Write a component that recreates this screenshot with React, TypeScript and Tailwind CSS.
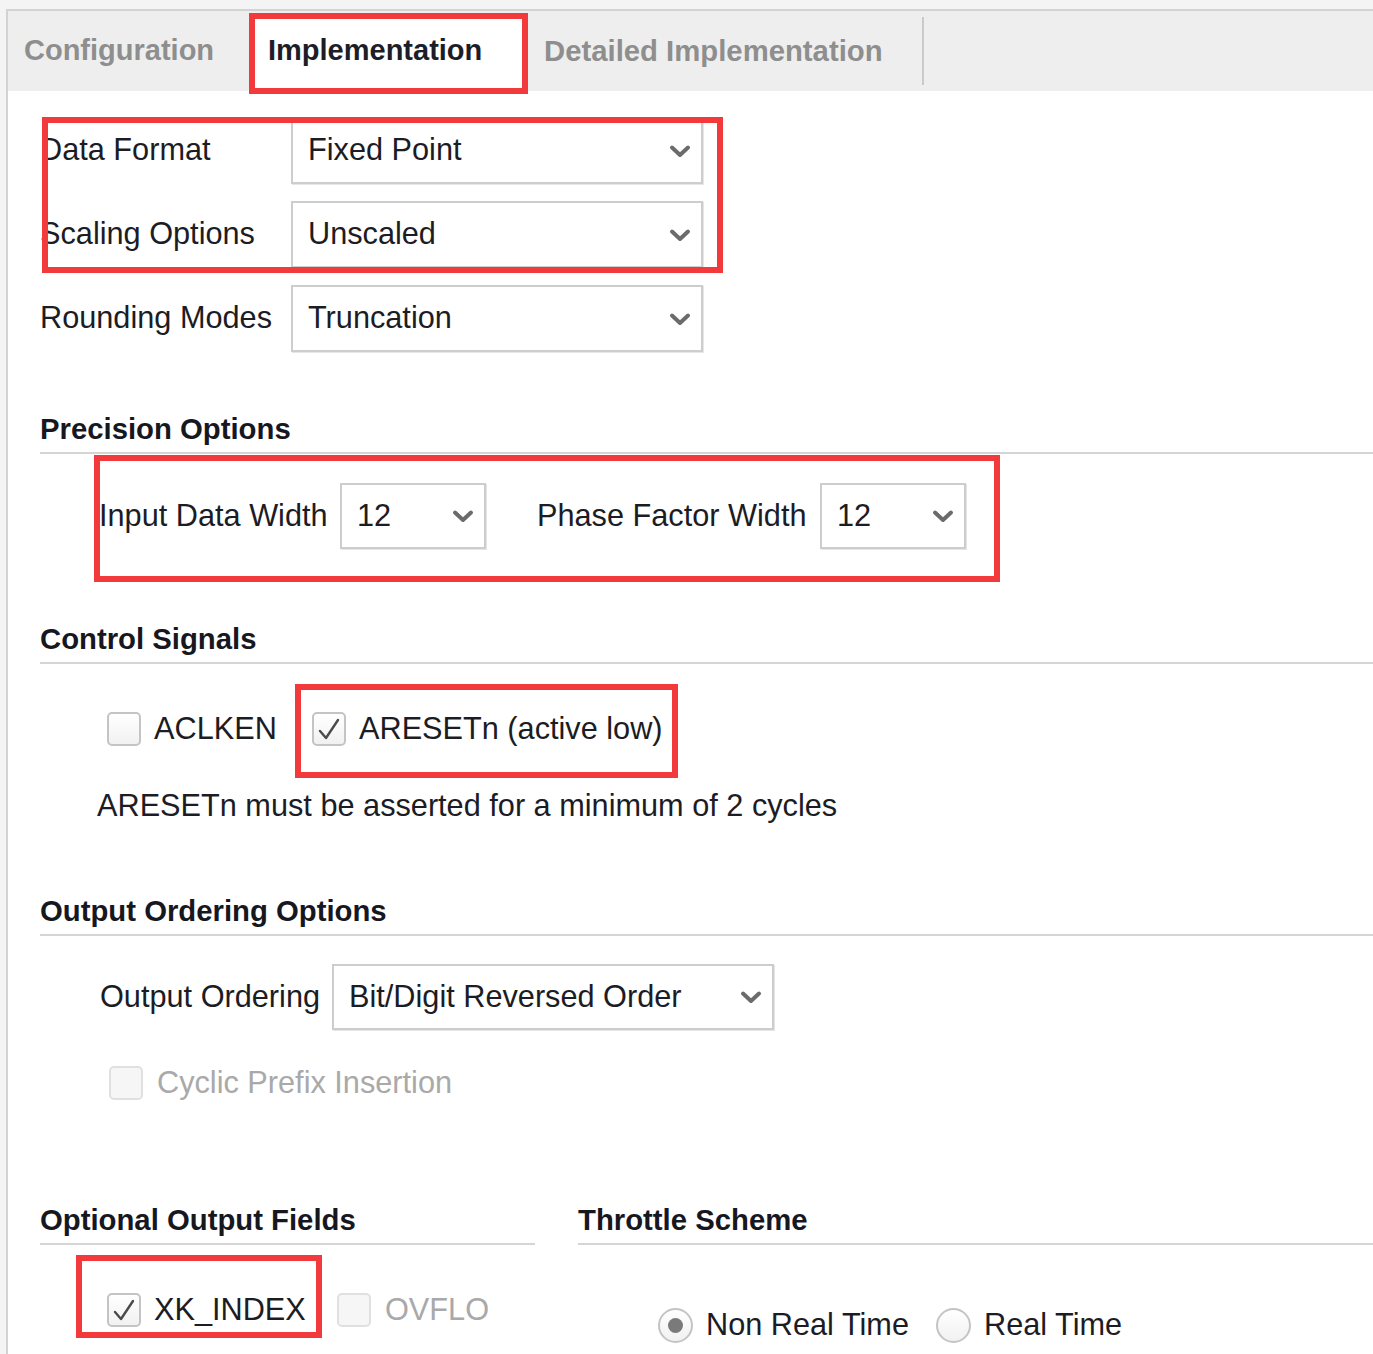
import React from "react";

const FONT = { fontFamily: '"Liberation Sans", Arial, sans-serif' };

function Chevron() {
  return (
    <svg width="22" height="14" viewBox="0 0 22 14" className="shrink-0">
      <path d="M3 3.5 L11 11 L19 3.5" fill="none" stroke="#6b6b6b" strokeWidth="4" strokeLinecap="round" strokeLinejoin="round" />
    </svg>
  );
}

function Select({ value, w, h = "h-[66px]" }: { value: string; w: string; h?: string }) {
  return (
    <div className={`${w} ${h} shrink-0 flex items-center justify-between border-2 border-[#cdcdcd] bg-white pl-[15px] pr-[10px] shadow-[1px_1px_0_#e6e6e6]`}>
      <span className="text-[30.7px] text-[#1c1c24] leading-none">{value}</span>
      <Chevron />
    </div>
  );
}

function Checkbox({ checked = false, disabled = false }: { checked?: boolean; disabled?: boolean }) {
  return (
    <div
      className={`w-[34px] h-[34px] shrink-0 rounded-[5px] border-2 flex items-center justify-center ${
        disabled ? "border-[#e0e0e0] bg-[#f6f6f6]" : "border-[#c4c4c4] bg-gradient-to-b from-white to-[#f1f1f1]"
      }`}
    >
      {checked && (
        <svg width="26" height="26" viewBox="0 0 26 26">
          <path d="M4 15 L10 22 L22 4" fill="none" stroke="#4a4a4a" strokeWidth="2.4" strokeLinecap="round" strokeLinejoin="round" />
        </svg>
      )}
    </div>
  );
}

function Radio({ selected = false }: { selected?: boolean }) {
  return (
    <div className="w-[35px] h-[35px] shrink-0 rounded-full border-2 border-[#c4c4c4] bg-gradient-to-b from-white to-[#f1f1f1] flex items-center justify-center">
      {selected && <div className="w-[15px] h-[15px] rounded-full bg-[#7a7a7a]" />}
    </div>
  );
}

function Heading({ children, className = "" }: { children: React.ReactNode; className?: string }) {
  return (
    <div className={`border-b-2 border-[#d5d5d5] pb-[6px] ${className}`}>
      <div className="text-[29.3px] font-bold leading-[34px] text-[#17171f]">{children}</div>
    </div>
  );
}

function RedBox({ className }: { className: string }) {
  return <div className={`absolute border-[6px] border-[#f23a3d] pointer-events-none ${className}`} />;
}

const T = "text-[30.7px] leading-none whitespace-nowrap";

export default function App() {
  return (
    <div style={FONT} className="relative w-[1373px] h-[1354px] overflow-hidden bg-[#f4f4f4] text-[#1c1c24]">
      <div className="ml-[6px] mt-[9px] h-[1345px] border-l-2 border-t-2 border-[#d3d3d3] bg-white flex flex-col">
        {/* Tab bar */}
        <div className="h-[80px] bg-[#eeeeee] flex items-stretch shrink-0">
          <div className="w-[242px] flex items-center pl-[16px]">
            <span className="text-[29px] font-bold text-[#8e8e8e]">Configuration</span>
          </div>
          <div className="w-[276px] bg-white flex items-center pl-[18px] mt-[6px]">
            <span className="text-[29px] font-bold text-[#1d1d28] -mt-[6px]">Implementation</span>
          </div>
          <div className="w-[398px] flex items-center pl-[18px] border-r-2 border-[#cacaca] my-[6px]">
            <span className="text-[29.3px] font-bold text-[#8e8e8e]">Detailed Implementation</span>
          </div>
        </div>

        {/* Content */}
        <div className="pl-[32px] pt-[26px] flex flex-col">
          <div className="flex flex-col gap-[17px]">
            <div className="flex items-center">
              <span className={`w-[251px] ${T}`}>Data Format</span>
              <Select value="Fixed Point" w="w-[412px]" h="h-[67px]" />
            </div>
            <div className="flex items-center">
              <span className={`w-[251px] ${T}`}>Scaling Options</span>
              <Select value="Unscaled" w="w-[412px]" h="h-[67px]" />
            </div>
            <div className="flex items-center">
              <span className={`w-[251px] ${T}`}>Rounding Modes</span>
              <Select value="Truncation" w="w-[412px]" h="h-[67px]" />
            </div>
          </div>

          <Heading className="mt-[60px]">Precision Options</Heading>
          <div className="mt-[29px] pl-[59px] flex items-center">
            <span className={`w-[241px] ${T}`}>Input Data Width</span>
            <Select value="12" w="w-[146px]" h="h-[66px]" />
            <span className={`ml-[51px] w-[283px] ${T}`}>Phase Factor Width</span>
            <Select value="12" w="w-[146px]" h="h-[66px]" />
          </div>

          <Heading className="mt-[73px]">Control Signals</Heading>
          <div className="mt-[48px] pl-[67px] flex items-center">
            <Checkbox />
            <span className={`ml-[13px] w-[158px] ${T}`}>ACLKEN</span>
            <Checkbox checked />
            <span className={`ml-[13px] ${T}`}>ARESETn (active low)</span>
          </div>
          <div className="mt-[43px] pl-[57px] text-[30.7px] leading-[34px]">ARESETn must be asserted for a minimum of 2 cycles</div>

          <Heading className="mt-[71px]">Output Ordering Options</Heading>
          <div className="mt-[28px] pl-[60px] flex items-center">
            <span className={`w-[232px] ${T}`}>Output Ordering</span>
            <Select value="Bit/Digit Reversed Order" w="w-[442px]" h="h-[66px]" />
          </div>
          <div className="mt-[36px] pl-[69px] flex items-center">
            <Checkbox disabled />
            <span className={`ml-[14px] ${T} text-[#a9a9a9]`}>Cyclic Prefix Insertion</span>
          </div>

          <div className="mt-[103px] flex gap-[43px]">
            <div className="w-[495px] flex flex-col">
              <Heading>Optional Output Fields</Heading>
              <div className="mt-[48px] pl-[67px] flex items-center">
                <Checkbox checked />
                <span className={`ml-[13px] w-[183px] ${T}`}>XK_INDEX</span>
                <Checkbox disabled />
                <span className={`ml-[14px] ${T} text-[#a9a9a9]`}>OVFLO</span>
              </div>
            </div>
            <div className="flex-1 flex flex-col">
              <Heading>Throttle Scheme</Heading>
              <div className="mt-[63px] pl-[80px] flex items-center">
                <Radio selected />
                <span className={`ml-[13px] w-[230px] ${T}`}>Non Real Time</span>
                <Radio />
                <span className={`ml-[13px] ${T}`}>Real Time</span>
              </div>
            </div>
          </div>
        </div>
      </div>

      {/* Annotation boxes */}
      <RedBox className="left-[249px] top-[13px] w-[279px] h-[81px]" />
      <RedBox className="left-[42px] top-[117px] w-[681px] h-[156px]" />
      <RedBox className="left-[94px] top-[455px] w-[906px] h-[127px]" />
      <RedBox className="left-[295px] top-[684px] w-[383px] h-[94px]" />
      <RedBox className="left-[76px] top-[1255px] w-[246px] h-[83px]" />
    </div>
  );
}
